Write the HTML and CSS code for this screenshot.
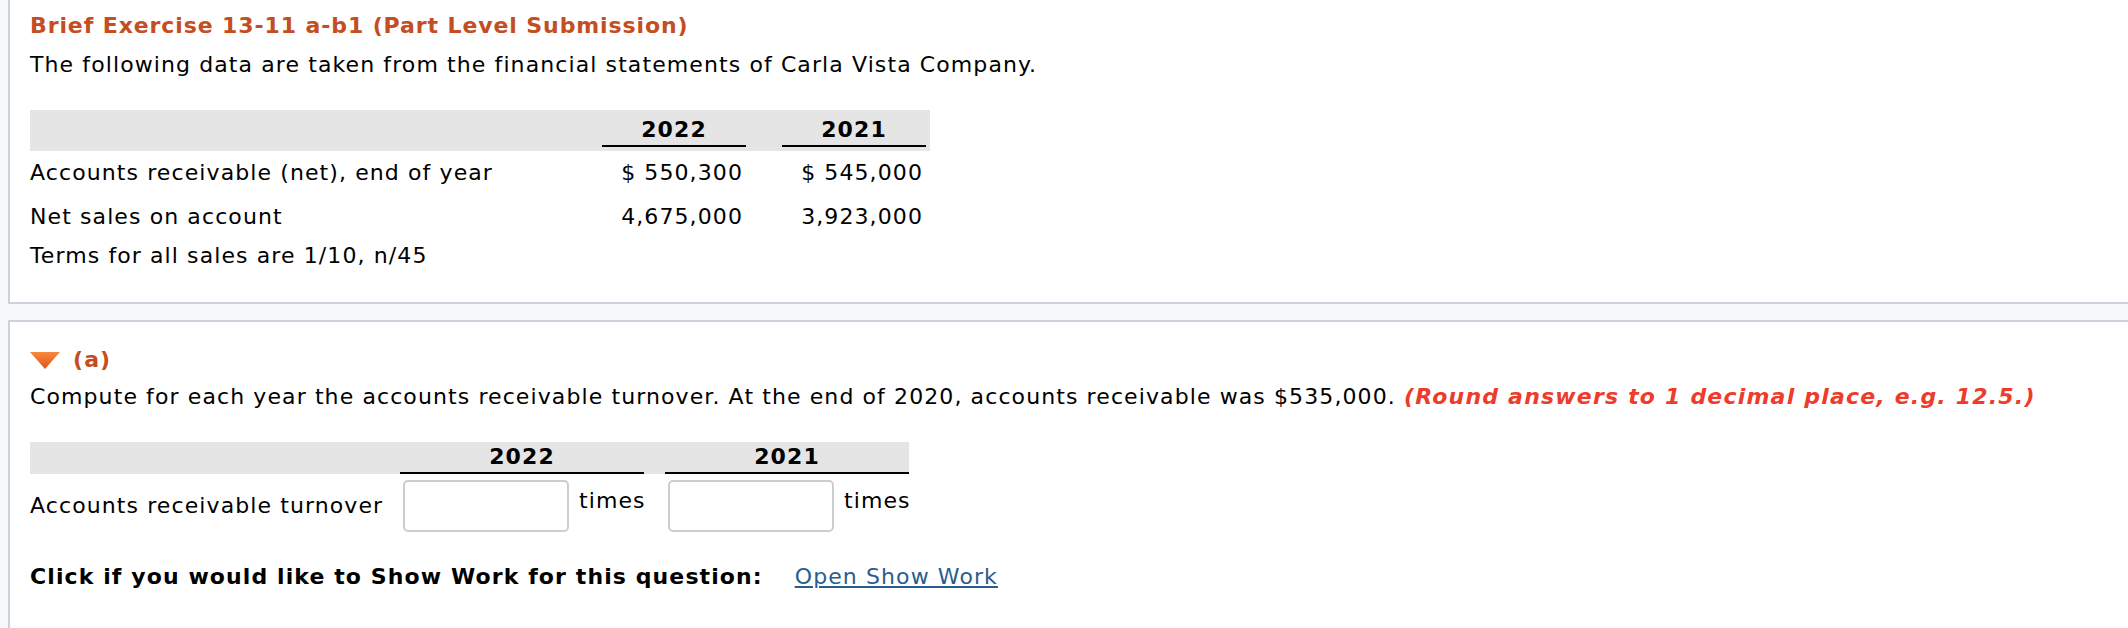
FILE: index.html
```html
<!DOCTYPE html>
<html lang="en">
<head>
<meta charset="utf-8">
<title>Brief Exercise 13-11 a-b1</title>
<link rel="stylesheet" href="styles.css">
</head>
<body>
<div class="panel panel-top">
  <h1 class="title">Brief Exercise 13-11 a-b1 (Part Level Submission)</h1>
  <p class="intro">The following data are taken from the financial statements of Carla Vista Company.</p>
  <div class="data-table">
    <div class="dt-head">
      <div class="dt-label"></div>
      <div class="dt-year">2022</div>
      <div class="dt-gap"></div>
      <div class="dt-year">2021</div>
      <div class="dt-end"></div>
    </div>
    <div class="dt-row dt-row1">
      <div class="dt-label">Accounts receivable (net), end of year</div>
      <div class="dt-val">$ 550,300</div>
      <div class="dt-gap"></div>
      <div class="dt-val">$ 545,000</div>
      <div class="dt-end"></div>
    </div>
    <div class="dt-row dt-row2">
      <div class="dt-label">Net sales on account</div>
      <div class="dt-val">4,675,000</div>
      <div class="dt-gap"></div>
      <div class="dt-val">3,923,000</div>
      <div class="dt-end"></div>
    </div>
    <div class="dt-row dt-row3">
      <div class="dt-label">Terms for all sales are 1/10, n/45</div>
    </div>
  </div>
</div>

<div class="panel panel-part">
  <div class="part-head">
    <span class="toggle"><svg width="30" height="18" viewBox="0 0 30 18"><defs><linearGradient id="tg" x1="0" y1="0" x2="0" y2="1"><stop offset="0" stop-color="#f58a3c"/><stop offset="1" stop-color="#e2531d"/></linearGradient></defs><polygon points="0,1 30,1 15,18" fill="url(#tg)"/></svg></span>
    <span class="part-label">(a)</span>
  </div>
  <p class="question">Compute for each year the accounts receivable turnover. At the end of 2020, accounts receivable was $535,000. <span class="note">(Round answers to 1 decimal place, e.g. 12.5.)</span></p>
  <div class="answer-table">
    <div class="at-head">
      <div class="at-label"></div>
      <div class="at-year">2022</div>
      <div class="at-gap"></div>
      <div class="at-year">2021</div>
    </div>
    <div class="at-row">
      <div class="at-label">Accounts receivable turnover</div>
      <div class="at-cell"><input class="answer" type="text"><span class="unit">times</span></div>
      <div class="at-gap"></div>
      <div class="at-cell"><input class="answer" type="text"><span class="unit">times</span></div>
    </div>
  </div>
  <p class="show-work"><span class="sw-label">Click if you would like to Show Work for this question:</span><a class="sw-link" href="#">Open Show Work</a></p>
</div>
</body>
</html>
```

FILE: styles.css
```css
html, body {
  margin: 0;
  padding: 0;
}
body {
  background: #f7f8fa;
  font-family: "DejaVu Sans", Verdana, sans-serif;
  font-size: 22px;
  letter-spacing: 1.1px;
  color: #000;
  width: 2128px;
  height: 628px;
  overflow: hidden;
}
.panel {
  background: #fff;
  margin-left: 8px;
  border-left: 2px solid #cbd2dc;
  padding-left: 20px;
}
.panel-top {
  padding-top: 12px;
  padding-bottom: 29px;
  border-bottom: 2px solid #cbd2dc;
}
.title {
  margin: 0;
  font-size: 22px;
  line-height: 28px;
  font-weight: bold;
  letter-spacing: 0.9px;
  color: #c44d22;
}
.intro {
  margin: 11px 0 0 0;
  line-height: 28px;
}
.data-table {
  margin-top: 31px;
  width: 900px;
}
.dt-head, .dt-row {
  display: grid;
  grid-template-columns: 572px 144px 36px 144px 4px;
}
.dt-head {
  background: #e5e5e5;
  padding-bottom: 4px;
}
.dt-year {
  text-align: center;
  font-weight: bold;
  padding-top: 5px;
  line-height: 30px;
  border-bottom: 2px solid #000;
}
.dt-val {
  text-align: right;
  padding-right: 3px;
  white-space: nowrap;
}
.dt-row1 { line-height: 44px; }
.dt-row2 { line-height: 44px; }
.dt-row3 { display: block; line-height: 34px; }

.panel-part {
  box-sizing: border-box;
  margin-top: 16px;
  border-top: 2px solid #cbd2dc;
  padding-top: 24px;
  height: 308px;
}
.part-head {
  display: flex;
  align-items: center;
  height: 28px;
}
.toggle {
  display: flex;
  width: 30px;
  height: 18px;
  margin-right: 13px;
}
.part-label {
  font-weight: bold;
  color: #c44d22;
  line-height: 28px;
}
.question {
  margin: 9px 0 0 0;
  line-height: 28px;
  white-space: nowrap;
}
.note {
  color: #ee3b2b;
  font-weight: bold;
  font-style: italic;
  letter-spacing: 1.2px;
}
.answer-table {
  margin-top: 31px;
  width: 879px;
}
.at-head, .at-row {
  display: grid;
  grid-template-columns: 370px 244px 21px 244px;
}
.at-head {
  background: #e5e5e5;
}
.at-year {
  text-align: center;
  font-weight: bold;
  line-height: 30px;
  border-bottom: 2px solid #000;
}
.at-row {
  padding-top: 6px;
  align-items: center;
}
.at-label {
  line-height: 28px;
  white-space: nowrap;
}
.at-cell {
  display: flex;
  align-items: flex-start;
}
.answer {
  box-sizing: border-box;
  width: 166px;
  height: 52px;
  margin: 0 0 0 3px;
  border: 2px solid #cdcdcd;
  border-radius: 5px;
  background: #fff;
  padding: 0 8px;
  font: inherit;
}
.unit {
  margin-left: 10px;
  padding-top: 7px;
  line-height: 28px;
}
.show-work {
  margin: 31px 0 0 0;
  line-height: 28px;
}
.sw-label {
  font-weight: bold;
}
.sw-link {
  margin-left: 32px;
  color: #2a5d8f;
  text-decoration: underline;
}
```
